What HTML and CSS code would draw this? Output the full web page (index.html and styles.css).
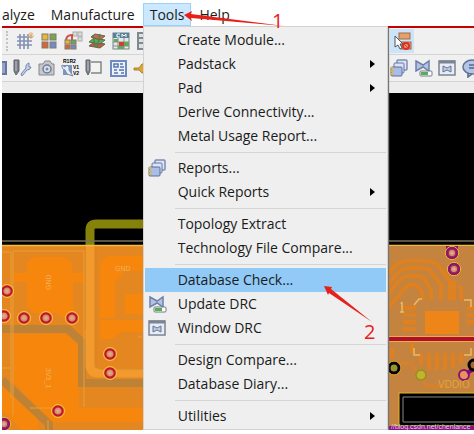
FILE: index.html
```
<!DOCTYPE html>
<html lang="en">
<head>
    <meta charset="UTF-8" />
    <title>Tools - Database Check</title>
    <link rel="stylesheet" href="styles.css">
</head>
<body>

<!-- shared icons -->
<svg class="sprite" aria-hidden="true">
    <symbol id="reports" viewBox="0 0 20 20">
        <rect x="8" y="2" width="10" height="10" rx="1" fill="#dce6f7" stroke="#7d8db3" stroke-width="1.5"/>
        <rect x="5" y="5" width="10" height="10" rx="1" fill="#dbe4f5" stroke="#6477a2"/>
        <rect x="2" y="9" width="11" height="9" rx="1" fill="#a9bde6" stroke="#5c6f99"/>
        <path d="M3 9v9" stroke="#d9b64c" stroke-width="3" stroke-dasharray="2 1"/>
    </symbol>
    <symbol id="update" viewBox="0 0 20 20">
        <path d="M3 3l7 4 6-4v10l-6-4-7 4z" fill="#b4c3e3" stroke="#6f80a8" stroke-width="1.5"/>
        <rect x="7" y="13" width="12" height="5" rx="1" fill="#fff" stroke="#737d87"/>
        <rect x="8" y="14" width="7" height="3" fill="#55ad55"/>
    </symbol>
    <symbol id="window" viewBox="0 0 20 20">
        <rect x="2" y="3" width="16" height="14" fill="#e8edf5" stroke="#7b8493" stroke-width="1.5"/>
        <path d="M2 4h16" stroke="#7b8493" stroke-width="3"/>
        <path d="M6 8l4 2 4-2v6l-4-2-4 2z" fill="#bdcae3" stroke="#657494"/>
    </symbol>
    <symbol id="via" viewBox="-8 -8 16 16">
        <circle r="6.5" fill="#f3a63c" stroke="#ffc13a"/>
        <circle r="4.7" fill="#dd8c66" stroke="#bb1730" stroke-width="2.2"/>
        <path d="M-2 0h4M0-2v4" stroke="#d7b69a"/>
    </symbol>
    <symbol id="via-purple" viewBox="-8 -8 16 16">
        <circle r="6.7" fill="#8b176a" stroke="#f0b735"/>
        <circle r="3.8" fill="#d08c64" stroke="#a51b61"/>
        <path d="M-2 0h4M0-2v4" stroke="#e0b39a"/>
    </symbol>
</svg>

<div class="app">
    <nav class="menubar">
        <button class="menu-title cut">alyze</button>
        <button class="menu-title">Manufacture</button>
        <div class="menu-holder">
            <button class="menu-title active">Tools</button>
            <div class="dropdown">
                <button class="item">Create Module...</button>
                <button class="item sub">Padstack</button>
                <button class="item sub">Pad</button>
                <button class="item">Derive Connectivity...</button>
                <button class="item">Metal Usage Report...</button>
                <hr>
                <button class="item"><svg class="icon"><use href="#reports"/></svg>Reports...</button>
                <button class="item sub">Quick Reports</button>
                <hr>
                <button class="item">Topology Extract</button>
                <button class="item">Technology File Compare...</button>
                <hr>
                <button class="item selected">Database Check...</button>
                <button class="item"><svg class="icon"><use href="#update"/></svg>Update DRC</button>
                <button class="item"><svg class="icon"><use href="#window"/></svg>Window DRC</button>
                <hr>
                <button class="item">Design Compare...</button>
                <button class="item">Database Diary...</button>
                <hr>
                <button class="item sub">Utilities</button>
            </div>
        </div>
        <button class="menu-title">Help</button>
    </nav>

    <div class="toolbar first">
        <div class="tools">
            <span class="grip"></span>
            <button class="tool" aria-label="Grid"><svg viewBox="0 0 20 20">
                <path d="M5 3v15M9 3v15M13 3v15M2 6h15M2 10h15M2 14h15" stroke="#8290b4" stroke-width="1.6"/>
                <path d="M16 1v7M12 5h7M14 2l4 5M18 2l-4 5" stroke="#e5aa72"/>
            </svg></button>
            <button class="tool" aria-label="Color"><svg viewBox="0 0 20 20">
                <g stroke="#85796a"><rect x="3" y="3" width="6" height="6" fill="#e6b93c"/><rect x="11" y="3" width="6" height="6" fill="#74a552"/>
                <rect x="3" y="11" width="6" height="6" fill="#d6643d"/><rect x="11" y="11" width="6" height="6" fill="#6b8fce"/></g>
            </svg></button>
            <button class="tool" aria-label="Swap colors"><svg viewBox="0 0 20 20">
                <g fill="#ddd" stroke="#aaa"><rect x="10" y="1" width="4" height="4"/><rect x="15" y="1" width="4" height="4"/><rect x="15" y="6" width="4" height="4"/></g>
                <path d="M3 10q0-6 6-6v5" fill="none" stroke="#cf5148" stroke-width="2"/>
                <g stroke="#85796a"><rect x="2" y="9" width="5" height="4" fill="#e6b93c"/><rect x="8" y="9" width="5" height="4" fill="#74a552"/><rect x="2" y="14" width="5" height="4" fill="#d6643d"/><rect x="8" y="14" width="5" height="4" fill="#6b8fce"/></g>
            </svg></button>
            <button class="tool" aria-label="Layers"><svg viewBox="0 0 20 20">
                <path d="M2 15l5-4 11 2-5 4z" fill="#c5583f" stroke="#6a604d"/><path d="M2 11l5-4 11 2-5 4z" fill="#63a75b" stroke="#56704c"/>
                <path d="M4 6l4-3 10 2-5 4z" fill="#c76a4c" stroke="#6a604d"/><path d="M6 4l2 12M13 3l-3 14" stroke="#4f844b" stroke-width="1.5"/>
            </svg></button>
            <button class="tool" aria-label="Constraint manager"><svg viewBox="0 0 20 20">
                <rect x="2" y="2" width="16" height="16" fill="#e5e9e3" stroke="#758283"/>
                <rect x="2" y="2" width="16" height="5" fill="#55819b"/><path d="M9 3H6v3h3M11 6V3l2 2 2-2v3" fill="none" stroke="#fff"/>
                <path d="M2 11h16M2 15h16M7 7v11M13 7v11" stroke="#83918b"/>
                <path d="M3 8h4v3H3zM13 11h5v4h-5zM7 15h6v3H7z" fill="#64a85f"/><path d="M8 11h5v4H8z" fill="#cd3f38"/>
            </svg></button>
            <button class="tool" aria-label="Table"><svg viewBox="0 0 20 20"><path d="M3 2h15v16H3zM3 7h15M3 12h15" fill="#dce1e4" stroke="#7f8a90" stroke-width="2"/></svg></button>
        </div>
        <div class="tools right">
            <button class="tool on" aria-label="Select shapes"><svg viewBox="0 0 20 20">
                <rect x="7" y="2" width="11" height="6" fill="#e4a169" stroke="#9f6c4c"/><rect x="9" y="11" width="10" height="7" fill="#dda176" stroke="#a66347"/>
                <circle cx="14" cy="15" r="3" fill="none" stroke="#df3024" stroke-width="2"/><path d="M12 13l4 4" stroke="#df3024"/>
                <path d="M3 5v11l3-2 2 4 2-1-2-4h3z" fill="#fff" stroke="#555"/>
            </svg></button>
        </div>
    </div>

    <div class="toolbar second">
        <div class="tools">
            <button class="tool half" aria-label="Module"><svg viewBox="0 0 20 20"><rect x="4" y="4" width="12" height="12" fill="#91a5cc" stroke="#66779b" stroke-width="2"/></svg></button>
            <button class="tool" aria-label="Edit options"><svg viewBox="0 0 20 20">
                <path d="M2 2h5v11l-3 4-2-4z" fill="#777c84" stroke="#5f646b"/><path d="M4 3v10" stroke="#c3c8cc"/>
                <path d="M9 16l5-6a4 4 0 0 1 3-5v4h2a4 4 0 0 1-4 3l-5 6z" fill="#c2d1ee" stroke="#7485a8"/>
            </svg></button>
            <button class="tool" aria-label="Snapshot"><svg viewBox="0 0 20 20">
                <path d="M3 6h4l2-3h5l2 3h2v11H3z" fill="#c5c8cd" stroke="#84878d"/>
                <circle cx="11" cy="11" r="4" fill="#d5e0f2" stroke="#757c89" stroke-width="1.5"/><circle cx="11" cy="11" r="1.5" fill="#6e8cbe"/>
            </svg></button>
            <button class="tool" aria-label="Rename refdes"><svg viewBox="0 0 20 20">
                <rect x="3" y="7" width="9" height="10" fill="#7896ce"/><path d="M7 16l-2-4a4 4 0 0 1-3-5l3 2 2-2a4 4 0 0 1 2 5l4 6z" fill="#e5ecf8" stroke="#7d899e"/>
                <text x="3" y="5" class="ref">R1R2</text><text x="13" y="11" class="ref">V1</text><text x="13" y="17" class="ref">V2</text>
            </svg></button>
            <button class="tool" aria-label="Edit shape"><svg viewBox="0 0 20 20">
                <path d="M7 4h10v11H7" fill="#f2f2f0" stroke="#838687" stroke-width="1.5"/><path d="M2 2h4v11l-2 4-2-4z" fill="#7c8188" stroke="#60656c"/><path d="M4 3v10" stroke="#bcc2c8"/>
            </svg></button>
            <button class="tool" aria-label="Board"><svg viewBox="0 0 20 20">
                <rect x="3" y="3" width="15" height="15" fill="#edf2fa" stroke="#6f8abd" stroke-width="2"/>
                <path d="M6 6h4v3H6zM12 6h3M12 9h4M6 12h3M11 12h5M6 15h4M13 15h3" fill="none" stroke="#5475b5" stroke-width="1.5"/>
            </svg></button>
            <button class="tool" aria-label="Pin"><svg viewBox="0 0 20 20"><path d="M2 10h5l3-4h8v9h-8l-3-3H2z" fill="#e2a52c" stroke="#aa812e"/></svg></button>
        </div>
        <div class="tools right">
            <button class="tool" aria-label="Reports"><svg><use href="#reports"/></svg></button>
            <button class="tool" aria-label="Update DRC"><svg><use href="#update"/></svg></button>
            <button class="tool" aria-label="Window DRC"><svg><use href="#window"/></svg></button>
            <button class="tool" aria-label="Help"><svg viewBox="0 0 20 20"><ellipse cx="11" cy="9" rx="9" ry="7" fill="#b5c5e8" stroke="#607196" stroke-width="1.5"/><path d="M8 7h6M8 10h6M7 15v4l4-3" fill="none" stroke="#53678f" stroke-width="1.5"/></svg></button>
        </div>
    </div>

    <div class="dock"></div>

    <svg class="board" viewBox="2 93 472 337" role="img" aria-label="Circuit board layout">
        <rect x="2" y="93" width="472" height="337" fill="#000"/>
        <path d="M90 245v-15q0-6 6-6h60" fill="none" stroke="#85820a" stroke-width="9"/>
        <path d="M2 241h472" stroke="#77705c" stroke-width="1.5"/>

        <!-- left copper -->
        <rect x="2" y="245" width="200" height="185" fill="#e58720"/>
        <g fill="#f7860d">
            <path d="M27 262l6-5h32l7 6v10h13v9H73v36h-8l-9-5H34l-7-7v-24H13v-9h14z"/>
            <path d="M100 262l8-6h35v15h-18l-10 12v35h-15z"/>
            <path d="M13 334h52l14 12v62h64v14H53l-11-9-29-32z"/>
            <path d="M100 320h43v12h-22l-8 7h-13zM2 385l36 34v11H22L2 410z"/>
            <path d="M125 294h18v20h-18z"/>
        </g>
        <path d="M2 329h66l14 13v41h61M2 380l47 44v6" fill="none" stroke="#bd8235" stroke-width="8"/>
        <path d="M90 246v119q0 8 8 8h45" fill="none" stroke="#f29a2e" stroke-width="9"/>
        <path d="M85 246v84M96 246v117q0 6 6 6h41" fill="none" stroke="#d38525"/>
        <path d="M2 252h9v146M13 415V251h71v156M2 368h8M30 408h22M48 420v10M138 337h4" fill="none" stroke="#e79f3c"/>
        <text x="115" y="271" class="net">GND</text>
        <text x="51" y="290" class="net" transform="rotate(-90 51 290)">GND</text>
        <text x="46" y="368" class="net" transform="rotate(90 46 368)">3V3_1</text>
        <path d="M2 245.5h472" stroke="#f2bd3b" stroke-width="1.5"/>
        <g>
            <use href="#via" x="-1" y="283" width="16" height="16"/>
            <use href="#via" x="-4" y="308" width="16" height="16"/>
            <use href="#via" x="16" y="310" width="16" height="16"/>
            <use href="#via" x="38" y="310" width="16" height="16"/>
            <use href="#via" x="64" y="310" width="16" height="16"/>
            <use href="#via" x="102" y="346" width="16" height="16"/>
            <use href="#via" x="102" y="365" width="16" height="16"/>
            <use href="#via" x="50" y="403" width="16" height="16"/>
            <use href="#via-purple" x="-4" y="416" width="16" height="16"/>
        </g>

        <!-- right copper -->
        <rect x="380" y="246" width="94" height="184" fill="#c4833e"/>
        <g fill="none" stroke="#df811f" stroke-width="4">
            <path d="M386 277q10-16 21-16h21q8 0 13 8l9 12v20"/>
            <path d="M386 288q12-20 23-20h14q7 0 10 7l8 10v15"/>
            <path d="M386 299q13-23 23-23h9q6 0 8 6l5 8v10"/>
            <path d="M388 308l16-19q8-8 14-2 5 4 5 13M454 281v19M461 286v14"/>
            <path d="M403 308h13M403 315h13M403 322h13M403 329h13M467 308h7M467 315h7M467 322h7"/>
            <path d="M421 353v12M429 353v17M437 353v17M445 353v17M453 353v15M461 353v10M412 343v10M392 348v10"/>
        </g>
        <rect x="425" y="311" width="34" height="23" fill="#ed8518"/>
        <path d="M386 380l14-17h11l16 23h22" fill="none" stroke="#d48130" stroke-width="4"/>
        <path d="M414 305l5-6h3M464 300h7v7M414 348v7h6M464 355h7v-7M402 302v10M400 312h4M401 304l1-2" fill="none" stroke="#e9bd66" stroke-width="1.5"/>
        <rect x="380" y="336" width="94" height="6" fill="#ecb333"/>
        <rect x="380" y="337" width="94" height="4" fill="#b10c35"/>
        <rect x="446" y="246" width="12" height="5" fill="#85145f"/>
        <use href="#via-purple" x="444" y="245" width="16" height="16"/>
        <use href="#via-purple" x="446" y="261" width="16" height="16"/>
        <circle cx="394" cy="368" r="5" fill="#9b9131" stroke="#000" stroke-width="3"/>
        <circle cx="394" cy="368" r="7" fill="none" stroke="#d49c29"/>
        <circle cx="421" cy="375" r="5" fill="#c5b12b" stroke="#919027" stroke-width="1.5"/>
        <circle cx="464" cy="375" r="5" fill="#e29462" stroke="#93106f" stroke-width="2"/>
        <path d="M467 373l7-4" stroke="#8a087e" stroke-width="4"/>
        <circle cx="474" cy="365" r="5" fill="#a5672f" stroke="#000" stroke-width="3"/>
        <text x="438" y="388" class="vddio">VDDIO</text>
        <rect x="399" y="393" width="90" height="33" fill="#000" stroke="#e0b42b"/>
        <path d="M474 397h-71v25h71" fill="none" stroke="#888"/>
        <rect x="386" y="426" width="88" height="4" fill="#8d107f"/>
        <text x="391" y="429" class="watermark">//blog.csdn.net/chenlance</text>
    </svg>

    <svg class="mark one" viewBox="0 0 110 36" aria-hidden="true">
        <path d="M1 7l8-4-1 3 93 12-93-8 1 3z" fill="#e8201a"/>
        <text x="89" y="20">1</text>
    </svg>
    <svg class="mark two" viewBox="0 0 60 66" aria-hidden="true">
        <path d="M1 1l8 1-1 2 41 33L6 8l-1 2z" fill="#e8201a"/>
        <text x="41" y="54">2</text>
    </svg>
</div>

</body>
</html>
```

FILE: styles.css
```
* {
    box-sizing: border-box;
}
body {
    margin: 0;
    background-color: #fff;
    color: #1b1b1b;
    font-family: "Open Sans", "Noto Sans", sans-serif;
    font-size: 14px;
}
button {
    font: inherit;
    color: inherit;
    background: none;
    border: none;
    padding: 0;
}
.sprite {
    display: none;
}
.app {
    position: relative;
    padding-left: 2px;
    overflow: hidden;
}

/* menu bar */
.menubar {
    display: flex;
    height: 26px;
    padding-top: 3px;
}
.menu-title {
    height: 23px;
    padding: 0 8px;
    line-height: 22px;
}
.menu-title.cut {
    padding-left: 0;
}
.menu-title.active {
    background-color: #cce8ff;
    border: 1px solid #99d1ff;
    padding: 0 6px;
    line-height: 20px;
}
.menu-holder {
    position: relative;
}
.dropdown {
    position: absolute;
    top: 23px;
    left: 0;
    z-index: 2;
    width: 245px;
    padding: 1px;
    background-color: #efefef;
    border: 1px solid #d2d2d2;
    box-shadow: 1px 2px 1px #777;
}
.item {
    display: block;
    position: relative;
    width: 100%;
    height: 24px;
    padding-left: 33px;
    line-height: 24px;
    text-align: left;
    white-space: nowrap;
}
.item.selected {
    background-color: #91c9f7;
}
.item.sub::after {
    content: "";
    position: absolute;
    right: 11px;
    top: 8px;
    border-left: 5px solid #000;
    border-top: 4px solid transparent;
    border-bottom: 4px solid transparent;
}
.icon {
    position: absolute;
    left: 2px;
    top: 2px;
    width: 20px;
    height: 20px;
}
.dropdown hr {
    height: 1px;
    margin: 4px 0 3px 30px;
    border: none;
    background-color: #d5d5d5;
}

/* toolbars */
.toolbar {
    display: grid;
    grid-template-columns: 1fr 84px;
    height: 27px;
    background-color: #f0f0f0;
    border-bottom: 1px solid #d4d4d4;
}
.toolbar.first {
    height: 29px;
    border-top: 2px solid #c40000;
}
.tools {
    display: flex;
    align-items: center;
    overflow: hidden;
}
.tool {
    flex: none;
    display: flex;
    align-items: center;
    justify-content: center;
    width: 24px;
    height: 24px;
}
.tool svg {
    width: 20px;
    height: 20px;
}
.tool.half {
    width: 8px;
    justify-content: flex-end;
    overflow: hidden;
}
.tool.half svg {
    flex: none;
}
.tool.on {
    background-color: #cce4f7;
}
.second .right {
    margin-left: -3px;
}
.grip {
    width: 2px;
    height: 20px;
    margin: 0 5px 0 4px;
    border-left: 2px dotted #c3c3c3;
}
.ref {
    font: bold 5px "Liberation Sans", sans-serif;
}
.dock {
    height: 11px;
    background-color: #ededed;
}

/* board */
.board {
    display: block;
    width: 100%;
    height: auto;
}
.net {
    font: 7px "Liberation Sans", sans-serif;
    fill: #efb45b;
}
.vddio {
    font: 10px "Liberation Sans", sans-serif;
    fill: #dda83e;
}
.watermark {
    font: 7px "Liberation Sans", sans-serif;
    fill: #ddd;
}

/* step marks */
.mark {
    position: absolute;
    z-index: 3;
    pointer-events: none;
}
.mark text {
    font: 20px "Open Sans", sans-serif;
    fill: #e8201a;
}
.mark.one {
    left: 183px;
    top: 8px;
    width: 110px;
}
.mark.two {
    left: 323px;
    top: 285px;
    width: 60px;
}
```
